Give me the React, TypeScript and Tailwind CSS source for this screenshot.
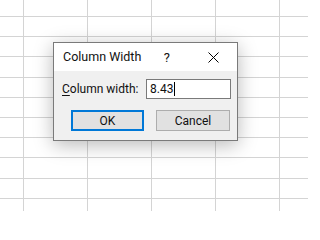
import React from 'react';

const font = { fontFamily: 'Roboto, "Segoe UI", Arial, sans-serif' };

function SheetGrid() {
  const rows = Array.from({ length: 10 });
  const cols = [24, 64, 64, 64, 64, 64];
  return (
    <div className="flex flex-col">
      <div className="flex h-[17px] border-b border-[#d4d4d4]">
        {cols.map((w, i) => (
          <div key={i} style={{ width: w }} className="shrink-0 border-r border-[#d4d4d4]" />
        ))}
      </div>
      {rows.map((_, r) => (
        <div key={r} className="flex h-[20.2px] border-b border-[#d4d4d4]">
          {cols.map((w, i) => (
            <div key={i} style={{ width: w }} className="shrink-0 border-r border-[#d4d4d4]" />
          ))}
        </div>
      ))}
    </div>
  );
}

function ColumnWidthDialog() {
  return (
    <div
      style={font}
      className="absolute left-[53px] top-[42px] flex h-[99px] w-[185px] flex-col border border-[#7a7a7a] bg-[#f0f0f0] text-[12px] text-[#111] shadow-[0_4px_18px_rgba(0,0,0,0.28)]"
    >
      <div className="flex h-[28px] items-center bg-white pl-[9px] pr-[18px]">
        <span className="text-[12.5px] leading-none">Column Width</span>
        <span className="ml-auto text-[13px] leading-none">?</span>
        <svg className="ml-[38px]" width="11" height="11" viewBox="0 0 11 11">
          <path d="M0.5 0.5 L10.5 10.5 M10.5 0.5 L0.5 10.5" stroke="#000" strokeWidth="1" />
        </svg>
      </div>
      <div className="flex items-center pl-[8px] pr-[6px] pt-[8px]">
        <span className="leading-none">
          <span className="underline underline-offset-2">C</span>olumn width:
        </span>
        <div className="ml-auto flex h-[20px] w-[85px] items-center border border-[#7a7a7a] bg-white pl-[3px]">
          <span className="leading-none">8.43</span>
          <span className="ml-[1px] h-[14px] w-px bg-black" />
        </div>
      </div>
      <div className="mt-[11px] flex pl-[17px] pr-[7px]">
        <button className="flex h-[21px] w-[73px] items-center justify-center border-2 border-[#0078d7] bg-[#e1e1e1] leading-none">
          OK
        </button>
        <button className="ml-auto flex h-[21px] w-[74px] items-center justify-center border border-[#adadad] bg-[#e1e1e1] leading-none">
          Cancel
        </button>
      </div>
    </div>
  );
}

export default function App() {
  return (
    <div className="relative h-[211px] w-[308px] overflow-hidden bg-white">
      <SheetGrid />
      <ColumnWidthDialog />
    </div>
  );
}
